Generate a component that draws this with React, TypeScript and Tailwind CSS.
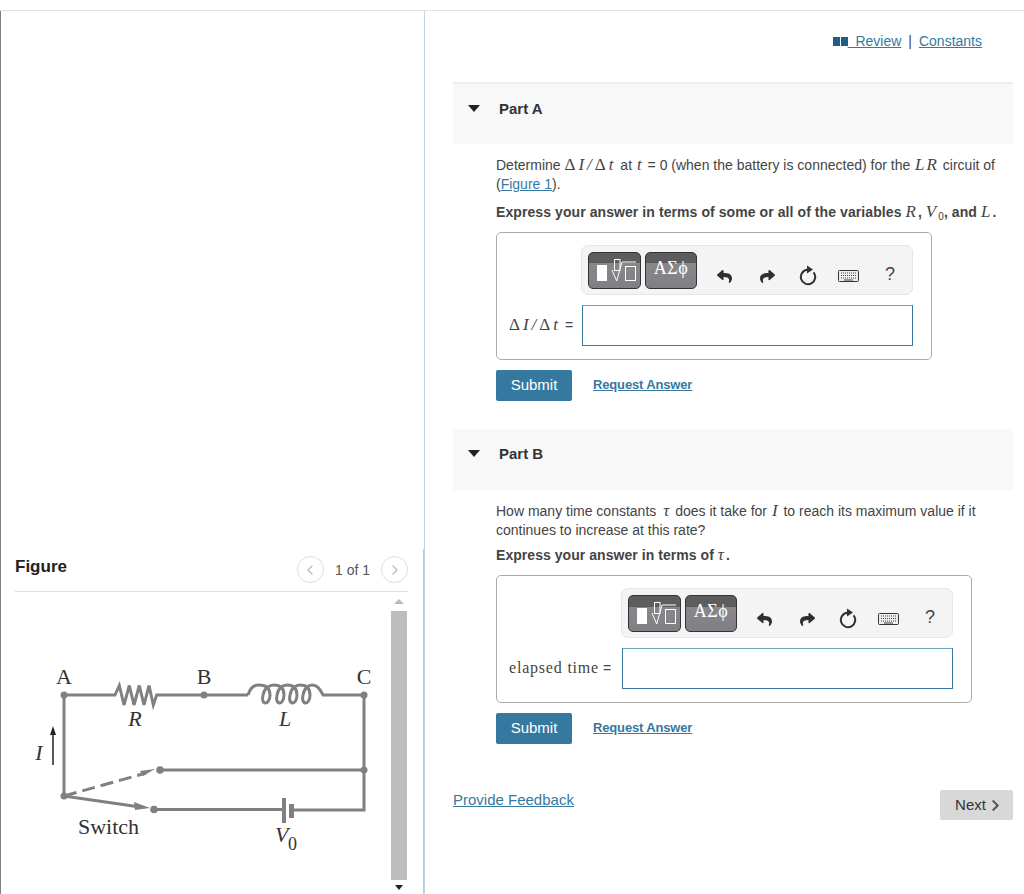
import { FaChevronRight, FaReply, FaShare } from "react-icons/fa";
import { ChevronLeft, ChevronRight } from "lucide-react";
import type { ReactNode } from "react";

const sans = "font-['Liberation_Sans',Arial,sans-serif]";

function M({ children }: { children: ReactNode }) {
  return <span className="font-['Liberation_Serif',serif] font-normal italic text-[17px] leading-none tracking-[2px] text-[#444]">{children}</span>;
}

// delta over delta, set wider like the math font in the original
function Rate() {
  return (
    <span className="font-['Liberation_Serif',serif] font-normal italic text-[17px] leading-none tracking-[3px] text-[#444]">
      <span className="not-italic">Δ</span>I/<span className="not-italic">Δ</span>t
    </span>
  );
}

function Up({ children }: { children: ReactNode }) {
  return <span className="font-['Liberation_Serif',serif] text-[16px] leading-none tracking-[0.8px] text-[#444]">{children}</span>;
}

function KeyboardIcon() {
  return (
    <svg width="22" height="14" viewBox="0 0 22 14">
      <rect x="0.5" y="1.5" width="20" height="11" rx="1" fill="#eee" stroke="#333" />
      <path d="M3 4h15M3 6.5h15M3 9h15" stroke="#444" strokeWidth="1.2" strokeDasharray="1 1" />
      <path d="M6 11h9" stroke="#444" />
    </svg>
  );
}

function ResetIcon() {
  return (
    <svg width="20" height="22" viewBox="0 0 20 22">
      <path d="M15.500 8.300A7.200 7.200 0 1 1 9.500 5.800" fill="none" stroke="#2f2f2f" strokeWidth="2" />
      <path d="M9 1.500l6 4-6 4z" fill="#2f2f2f" />
    </svg>
  );
}

function Toolbar() {
  return (
    <div className="w-[332px] h-[50px] rounded-[7px] border border-[#e6e6e6] bg-[#f4f4f4] flex items-center pl-[6px] pt-[1px]">
      <div className="w-[53px] h-[37px] rounded-[5px] border border-[#333] bg-[linear-gradient(#5d5d5d_0,#5d5d5d_30%,#88888c_30%,#808084_100%)]">
        <svg className="block" width="51" height="35" viewBox="0 0 51 35">
          <rect x="8" y="12" width="10" height="16" fill="#fff" />
          <rect x="25.500" y="6.500" width="5.500" height="11" fill="none" stroke="#fff" />
          <path d="M23 17l4.700 11L33 9h14" fill="none" stroke="#fff" />
          <rect x="36.500" y="13.500" width="10" height="14" fill="none" stroke="#fff" />
        </svg>
      </div>
      <div className="ml-[4px] w-[52px] h-[37px] rounded-[5px] border border-[#333] bg-[linear-gradient(#5d5d5d_0,#5d5d5d_30%,#88888c_30%,#808084_100%)] flex items-center justify-center pb-[4px] font-['Liberation_Serif',serif] text-[18px] tracking-[0.5px] text-white">
        ΑΣϕ
      </div>
      <FaReply className="ml-[20px] mt-[11px] text-[15px] text-[#2f2f2f]" />
      <FaShare className="ml-[28px] mt-[11px] text-[15px] text-[#2f2f2f]" />
      <span className="ml-[23px] mt-[9px]"><ResetIcon /></span>
      <span className="ml-[20px] mt-[11px]"><KeyboardIcon /></span>
      <span className="ml-[25px] mt-[8px] text-[18px] text-[#444]">?</span>
    </div>
  );
}

function AnswerBox({ width, label }: { width: string; label: ReactNode }) {
  return (
    <div className={`${width} h-[128px] rounded-[5px] border border-[#aaa] pr-[18px] pt-[12px] flex flex-col items-end`}>
      <Toolbar />
      <div className="w-full mt-[10px] pl-[12px] flex items-center justify-between">
        <div className="text-[14px] text-[#444]">{label}</div>
        <div className="w-[331px] h-[41px] border border-[#3679a0] border-t-[#6fa3c2] bg-white" />
      </div>
    </div>
  );
}

function SubmitRow() {
  return (
    <div className="mt-[10px] flex items-start">
      <button className="w-[76px] h-[31px] rounded-[2px] bg-[#3679a0] text-white text-[15px]">Submit</button>
      <a className="ml-[21px] mt-[6px] text-[13px] leading-[17px] tracking-[-0.15px] font-bold text-[#3679a0] underline">Request Answer</a>
    </div>
  );
}

function PartHeader({ title, top }: { title: string; top?: boolean }) {
  return (
    <div className={`bg-[#f8f8f8] flex items-start pt-[15px] ${top ? "h-[62px] border-t-2 border-[#eeeeee]" : "h-[61px]"}`}>
      <svg className="ml-[15px] mt-[6px]" width="12" height="7" viewBox="0 0 12 7">
        <path d="M0 0h12L6 7z" fill="#222" />
      </svg>
      <span className="ml-[19px] text-[15px] leading-[20px] font-bold text-[#333]">{title}</span>
    </div>
  );
}

function Circuit() {
  const wire = "#808080";
  const serif = "'Liberation Serif', serif";
  return (
    <svg className="block" width="376" height="302" viewBox="15 592 376 302">
      <g fill="none" stroke={wire} strokeWidth="3">
        <path d="M64 796V695H115L119.300 685.500 124 705 129.300 685.500 134 705 139.300 685.500 144 705 149 685.500 153.300 705 156.700 695H248" />
        <path d="M248 695C250 688 254 685 259 685C266 685 270 688 270 695C270 701 267 703 265.500 703C263 703 262 700 263 695C264 688 270 685 274 685C281 685 284 689 284 695C284 701 281 703 280 703C277 703 276 700 277 695C278 688 283 685 287 685C294 685 297 689 297 695C297 701 294 703 293 703C290 703 289 700 290 695C291 688 296 685 300 685C307 685 310 689 310 695C310 701 307 703 306 703C303 703 302 700 303 695C304 688 309 685 312 685C318 685 320 690 323 695H364V810H293" />
        <path d="M160 770H364M154 809.500H283" />
        <path d="M64 796L140 807" />
        <path d="M64 796L146 773" strokeDasharray="13 6" />
      </g>
      <path d="M282 798h4v25h-4zM289 804h5v14h-5z" fill={wire} />
      <path d="M134 802l16 6-15 2zM140 771l15-2-12 7z" fill={wire} />
      <g fill={wire}>
        <circle cx="64" cy="695" r="3.500" />
        <circle cx="204" cy="695" r="3.500" />
        <circle cx="364" cy="695" r="3.500" />
        <circle cx="160" cy="770" r="3.800" />
        <circle cx="364" cy="770" r="3.500" />
        <circle cx="64" cy="796" r="3.500" />
        <circle cx="154" cy="809.500" r="3.800" />
      </g>
      <path d="M53 765V731" stroke="#222" strokeWidth="1.500" />
      <path d="M53 726l3 9h-6z" fill="#222" />
      <g fontFamily={serif} fontSize="22" fill="#333">
        <text x="64" y="684" textAnchor="middle">A</text>
        <text x="204" y="684" textAnchor="middle">B</text>
        <text x="364" y="684" textAnchor="middle">C</text>
        <text x="78" y="834">Switch</text>
        <text x="135" y="726" textAnchor="middle" fontStyle="italic">R</text>
        <text x="285" y="726" textAnchor="middle" fontStyle="italic">L</text>
        <text x="39" y="760" textAnchor="middle" fontStyle="italic">I</text>
        <text x="275" y="842" fontStyle="italic">V</text>
        <text x="288" y="850" fontSize="18">0</text>
      </g>
    </svg>
  );
}

function FigurePanel() {
  return (
    <aside className="w-[425px] shrink-0 border-l border-r border-l-[#808080] border-r-[#c3d3e6] flex flex-col justify-end">
      <div className="border-r border-[#b9cbe0] pl-[14px] pr-[15px]">
        <div className="h-[43px] flex items-start justify-between border-b border-[#dddddd]">
          <span className="text-[17px] font-bold leading-[20px] mt-[8px] text-[#222]">Figure</span>
          <div className="flex items-center mt-[7px] text-[14px] text-[#555]">
            <span className="w-[27px] h-[27px] rounded-full border border-[#ddd] flex items-center justify-center text-[#bbb]"><ChevronLeft size={16} /></span>
            <span className="mx-[11px] mt-[1px]">1 of 1</span>
            <span className="w-[27px] h-[27px] rounded-full border border-[#ddd] flex items-center justify-center text-[#bbb]"><ChevronRight size={16} /></span>
          </div>
        </div>
        <div className="h-[302px] flex">
          <Circuit />
          <div className="w-[16px] flex flex-col items-center">
            <div className="h-[19px] flex items-center justify-center">
              <div className="w-0 h-0 border-x-[5px] border-x-transparent border-b-[5px] border-b-[#bbb]" />
            </div>
            <div className="w-full h-[269px] bg-[#bdbdbd]" />
            <div className="flex-1 flex items-center justify-center">
              <div className="w-0 h-0 border-x-[4px] border-x-transparent border-t-[5px] border-t-[#222]" />
            </div>
          </div>
        </div>
      </div>
    </aside>
  );
}

export default function App() {
  return (
    <div className={`${sans} w-[1024px] h-[894px] overflow-hidden bg-white pt-[10px] text-[14px] leading-[18.500px] text-[#444]`}>
      <div className="h-[884px] border-t border-[#e2e2e2] flex">
        <FigurePanel />
        <main className="flex-1 pl-[28px] pr-[11px]">
          <div className="h-[71px] pt-[21px] pr-[31px] flex justify-end items-start text-[14px] leading-[18px] text-[#3679a0]">
            <svg className="mt-[5px]" width="15" height="9" viewBox="0 0 15 9">
              <path d="M0 0h7v9H0zM8 0h7v9H8z" fill="#1f5f85" />
            </svg>
            <a className="underline whitespace-pre">  Review</a>
            <span className="mx-[7px] text-[#444]">|</span>
            <a className="underline">Constants</a>
          </div>

          <PartHeader title="Part A" top />
          <div className="pl-[43px] pt-[12px]">
            <p>
              Determine <Rate /> at <span className="ml-[1px]"><M>t</M></span> = 0 (when the battery is connected) for the <span className="ml-[1px]"><M>LR</M></span> circuit of<br />
              (<a className="underline text-[#3679a0]">Figure 1</a>).
            </p>
            <p className="mt-[10px] mb-[10.500px] font-bold tracking-[0.08px]">
              Express your answer in terms of some or all of the variables <M>R</M>, <M>V</M><sub className="text-[10px] font-normal">0</sub>, and <M>L</M>.
            </p>
            <AnswerBox width="w-[436px]" label={<><Rate /> =</>} />
            <SubmitRow />
          </div>

          <div className="mt-[28px]"><PartHeader title="Part B" /></div>
          <div className="pl-[43px] pt-[12px]">
            <p>
              How many time constants <span className="ml-[3px]"><M>τ</M></span> does it take for <span className="ml-[1px]"><M>I</M></span> to reach its maximum value if it<br />
              continues to increase at this rate?
            </p>
            <p className="mt-[7px] mb-[10.500px] font-bold tracking-[0.05px]">
              Express your answer in terms of <M>τ</M>.
            </p>
            <AnswerBox width="w-[476px]" label={<><Up>elapsed time</Up> =</>} />
            <SubmitRow />
          </div>

          <div className="mt-[46px] flex justify-between items-start">
            <a className="text-[15px] leading-[20px] text-[#3679a0] underline">Provide Feedback</a>
            <button className="w-[73px] h-[30px] pl-[4px] bg-[#d8d8d8] rounded-[2px] text-[15px] text-[#333] flex items-center justify-center gap-[3px]">
              Next <FaChevronRight className="text-[13px] text-[#555]" />
            </button>
          </div>
        </main>
      </div>
    </div>
  );
}
